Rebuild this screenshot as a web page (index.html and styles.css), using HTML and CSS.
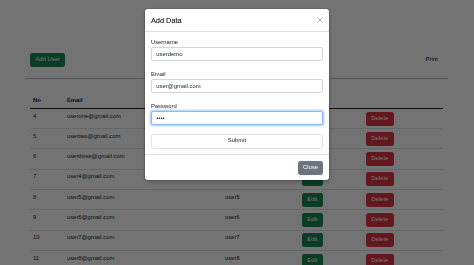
FILE: index.html
```html
<!DOCTYPE html>
<html lang="en">
<head>
<meta charset="utf-8">
<title>Users</title>
<link rel="stylesheet" href="styles.css">
</head>
<body>
<div class="page">
  <div class="toolbar">
    <button class="btn btn-success">Add User</button>
    <button class="btn btn-light">Print</button>
  </div>
  <hr class="divider">
  <table class="table">
    <thead>
      <tr>
        <th class="c-no">No</th>
        <th class="c-email">Email</th>
        <th class="c-user">Username</th>
        <th class="c-edit">Action</th>
        <th class="c-del"></th>
      </tr>
    </thead>
    <tbody>
      <tr><td>4</td><td>userone@gmail.com</td><td>userone</td><td><button class="btn btn-success">Edit</button></td><td><button class="btn btn-danger">Delete</button></td></tr>
      <tr><td>5</td><td>usertwo@gmail.com</td><td>usertwo</td><td><button class="btn btn-success">Edit</button></td><td><button class="btn btn-danger">Delete</button></td></tr>
      <tr><td>6</td><td>userthree@gmail.com</td><td>userthree</td><td><button class="btn btn-success">Edit</button></td><td><button class="btn btn-danger">Delete</button></td></tr>
      <tr><td>7</td><td>user4@gmail.com</td><td>user4</td><td><button class="btn btn-success">Edit</button></td><td><button class="btn btn-danger">Delete</button></td></tr>
      <tr><td>8</td><td>user5@gmail.com</td><td>user5</td><td><button class="btn btn-success">Edit</button></td><td><button class="btn btn-danger">Delete</button></td></tr>
      <tr><td>9</td><td>user6@gmail.com</td><td>user6</td><td><button class="btn btn-success">Edit</button></td><td><button class="btn btn-danger">Delete</button></td></tr>
      <tr><td>10</td><td>user7@gmail.com</td><td>user7</td><td><button class="btn btn-success">Edit</button></td><td><button class="btn btn-danger">Delete</button></td></tr>
      <tr><td>11</td><td>user8@gmail.com</td><td>user8</td><td><button class="btn btn-success">Edit</button></td><td><button class="btn btn-danger">Delete</button></td></tr>
    </tbody>
  </table>
</div>

<div class="backdrop"></div>

<div class="modal">
  <div class="modal-header">
    <h5 class="modal-title">Add Data</h5>
    <button class="btn-close" aria-label="Close">
      <svg viewBox="0 0 16 16" width="6" height="6"><path d="M1.5 1.5 L14.5 14.5 M14.5 1.5 L1.5 14.5" stroke="#000" stroke-width="1.6" fill="none"/></svg>
    </button>
  </div>
  <div class="modal-body">
    <div class="field">
      <label class="label">Username</label>
      <input class="input" type="text" value="userdemo">
    </div>
    <div class="field">
      <label class="label">Email</label>
      <input class="input" type="text" value="user@gmail.com">
    </div>
    <div class="field">
      <label class="label">Password</label>
      <input class="input focus" type="password" value="abcd">
    </div>
    <button class="btn btn-submit">Submit</button>
  </div>
  <div class="modal-footer">
    <button class="btn btn-secondary">Close</button>
  </div>
</div>
</body>
</html>
```
FILE: styles.css
```css
* { box-sizing: border-box; }
html, body { margin: 0; padding: 0; }
body {
  font-family: "Liberation Sans", Arial, sans-serif;
  font-size: 5.9px;
  line-height: 1.5;
  color: #212529;
  background: #fff;
  width: 474px;
  height: 265px;
  overflow: hidden;
}
.page { padding: 53px 31px 0 30px; }
.toolbar { display: flex; justify-content: space-between; align-items: center; }

.btn {
  display: inline-flex;
  align-items: center;
  justify-content: center;
  height: 14px;
  padding: 0 4.4px;
  border: 1px solid transparent;
  border-radius: 2.2px;
  font-family: inherit;
  font-size: 5.9px;
  line-height: 1;
  color: #fff;
  cursor: pointer;
}
.btn-success { background: #198754; border-color: #198754; }
.btn-danger { background: #dc3545; border-color: #dc3545; }
.btn-secondary { background: #6c757d; border-color: #6c757d; }
.btn-light { background: #fff; border-color: #fff; color: #000; }

.divider {
  margin: 11px -5px 0;
  border: 0;
  border-top: 1px solid #bcbec0;
}

.table {
  width: 413px;
  margin-top: 14px;
  border-collapse: collapse;
  table-layout: fixed;
}
.table th, .table td {
  text-align: left;
  vertical-align: top;
  padding: 2.65px 2.9px;
  border-bottom: 1px solid #dee2e6;
  font-weight: normal;
}
.table thead th {
  font-weight: bold;
  padding-top: 3.4px;
  border-bottom: 1px solid #212529;
}
.c-no { width: 34px; }
.c-email { width: 158px; }
.c-user { width: 77px; }
.c-edit { width: 64px; }
.c-del { width: 80px; }

.backdrop {
  position: fixed;
  inset: 0;
  background: rgba(0, 0, 0, 0.55);
}

.modal {
  position: fixed;
  top: 9px;
  left: 145px;
  width: 184px;
  background: #fff;
  border-radius: 3px;
  box-shadow: 0 0 0 0.5px rgba(0,0,0,.2), 0 2px 5px rgba(0,0,0,.25);
}
.modal-header {
  display: flex;
  align-items: center;
  justify-content: space-between;
  padding: 5.5px 5.9px;
  border-bottom: 1px solid #dee2e6;
}
.modal-title {
  margin: 0;
  font-size: 7.4px;
  line-height: 1.5;
  font-weight: 500;
  -webkit-text-stroke: 0.15px #212529;
}
.btn-close {
  display: flex;
  padding: 0;
  margin: 0;
  border: 0;
  background: transparent;
  opacity: 0.5;
}
.modal-body { padding: 5.9px 5.9px 5.4px; }
.field { margin-bottom: 9px; }
.label { display: block; line-height: 8.85px; }
.input {
  display: block;
  width: 100%;
  height: 14px;
  padding: 0 4.4px;
  border: 1px solid #ced4da;
  border-radius: 2.2px;
  font-family: inherit;
  font-size: 5.9px;
  color: #212529;
  background: #fff;
  outline: none;
}
.input.focus {
  border-color: #86b7fe;
  box-shadow: 0 0 0 1.5px rgba(13, 110, 253, 0.25);
}
.btn-submit {
  width: 100%;
  height: 15px;
  background: #fff;
  border-color: #dee2e6;
  color: #212529;
}
.modal-footer {
  display: flex;
  justify-content: flex-end;
  padding: 5.6px 5.9px;
  border-top: 1px solid #dee2e6;
}
.modal-footer .btn { width: 25px; }
```
